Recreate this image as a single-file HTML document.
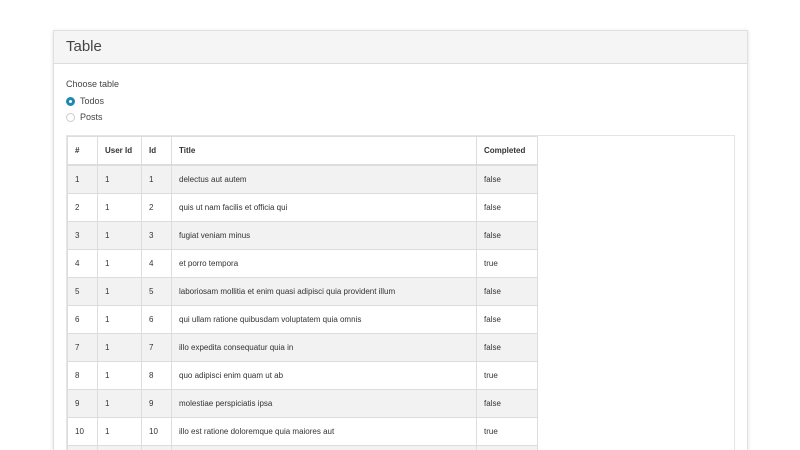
<!DOCTYPE html>
<html style="overflow:hidden;height:450px"><head><style>
html,body{margin:0;width:800px;height:450px;overflow:hidden}
body{position:relative;background:#fff;font-family:"Liberation Sans",sans-serif;color:#333}
.card{position:absolute;left:53px;top:30px;width:693px;height:419px;border:1px solid #e0e0e0;border-bottom:none;box-shadow:0 1px 4px rgba(0,0,0,.12);overflow:hidden}
.hd{height:32px;background:#f5f5f5;border-bottom:1px solid #ddd;font-size:15px;line-height:32px;padding-left:12px;color:#444}
.lbl{position:absolute;left:12px;top:48px;font-size:9px;color:#444}
.r{position:absolute;left:12px;font-size:9px;color:#444}
.r i{display:inline-block;width:9px;height:9px;border-radius:50%;border:1px solid #ccc;vertical-align:-2px;margin-right:5px;box-sizing:border-box}
.r i.on{border:3px solid #1e88b0;background:#fff}
.box{position:absolute;left:12px;top:104px;width:667px;height:330px;border:1px solid #e5e5e5;overflow:hidden}
table{border-collapse:collapse;font-size:8px;color:#333;table-layout:fixed;width:471px}
td,th{border:1px solid #ddd;height:27px;padding:0 0 0 7px;text-align:left;white-space:nowrap;overflow:hidden}
th{font-weight:bold;height:27px;border-bottom:2px solid #ddd}
tr.s td{background:#f2f2f2}
</style></head><body>
<div class="card">
<div class="hd">Table</div>
<div class="lbl">Choose table</div>
<div class="r" style="top:65px"><i class="on"></i>Todos</div>
<div class="r" style="top:81px"><i></i>Posts</div>
<div class="box">
<table>
<colgroup><col style="width:30px"><col style="width:44px"><col style="width:30px"><col style="width:305px"><col style="width:61px"></colgroup>
<tr><th>#</th><th>User Id</th><th>Id</th><th>Title</th><th>Completed</th></tr>
<tr class="s"><td>1</td><td>1</td><td>1</td><td>delectus aut autem</td><td>false</td></tr>
<tr><td>2</td><td>1</td><td>2</td><td>quis ut nam facilis et officia qui</td><td>false</td></tr>
<tr class="s"><td>3</td><td>1</td><td>3</td><td>fugiat veniam minus</td><td>false</td></tr>
<tr><td>4</td><td>1</td><td>4</td><td>et porro tempora</td><td>true</td></tr>
<tr class="s"><td>5</td><td>1</td><td>5</td><td>laboriosam mollitia et enim quasi adipisci quia provident illum</td><td>false</td></tr>
<tr><td>6</td><td>1</td><td>6</td><td>qui ullam ratione quibusdam voluptatem quia omnis</td><td>false</td></tr>
<tr class="s"><td>7</td><td>1</td><td>7</td><td>illo expedita consequatur quia in</td><td>false</td></tr>
<tr><td>8</td><td>1</td><td>8</td><td>quo adipisci enim quam ut ab</td><td>true</td></tr>
<tr class="s"><td>9</td><td>1</td><td>9</td><td>molestiae perspiciatis ipsa</td><td>false</td></tr>
<tr><td>10</td><td>1</td><td>10</td><td>illo est ratione doloremque quia maiores aut</td><td>true</td></tr>
<tr class="s"><td>11</td><td>1</td><td>11</td><td>vero rerum temporibus dolor</td><td>true</td></tr>
</table>
</div>
</div>
</body></html>
